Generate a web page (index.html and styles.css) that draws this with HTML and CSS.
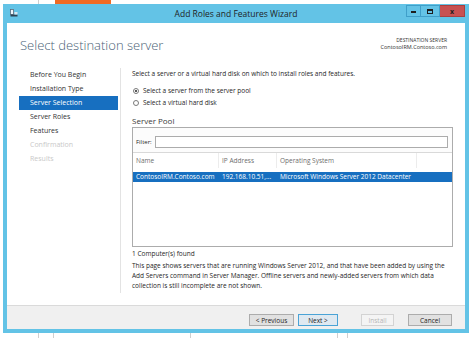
FILE: index.html
```html
<!DOCTYPE html>
<html lang="en">
<head>
    <meta charset="UTF-8">
    <title>Add Roles and Features Wizard</title>
    <link rel="stylesheet" href="styles.css">
</head>
<body>
    <div class="desktop">
        <div class="taskbar-tab"></div>
        <div class="desk-line line-a"></div>
        <div class="desk-line line-b"></div>
        <div class="desk-line line-c"></div>
        <div class="desk-line line-d"></div>
        <div class="desk-line line-e"></div>

        <div class="window">
            <div class="titlebar">
                <svg class="app-icon" viewBox="0 0 8 8">
                    <rect x="0.5" y="0.5" width="3" height="5" fill="#eef6fb" stroke="#5a6c7a" stroke-width="0.8"/>
                    <rect x="0.5" y="5.5" width="7" height="2" fill="#2f4252"/>
                    <rect x="4.5" y="3" width="3" height="2.5" fill="#d7e6ef"/>
                </svg>
                <div class="title">Add Roles and Features Wizard</div>
                <div class="controls">
                    <span class="ctl min"><i></i></span>
                    <span class="ctl max"><i></i></span>
                    <span class="ctl close">x</span>
                </div>
            </div>

            <div class="client">
                <div class="header">
                    <h1>Select destination server</h1>
                    <div class="dest">
                        <div class="dest-label">DESTINATION SERVER</div>
                        <div>ContosoIRM.Contoso.com</div>
                    </div>
                </div>

                <div class="main">
                    <ul class="nav">
                        <li>Before You Begin</li>
                        <li>Installation Type</li>
                        <li class="active">Server Selection</li>
                        <li>Server Roles</li>
                        <li>Features</li>
                        <li class="disabled">Confirmation</li>
                        <li class="disabled">Results</li>
                    </ul>

                    <div class="content">
                        <p class="intro">Select a server or a virtual hard disk on which to install roles and features.</p>

                        <div class="options">
                            <label class="option"><span class="radio checked"></span>Select a server from the server pool</label>
                            <label class="option"><span class="radio"></span>Select a virtual hard disk</label>
                        </div>

                        <h2>Server Pool</h2>

                        <div class="pool">
                            <div class="filter-row">
                                <span class="filter-label">Filter:</span>
                                <div class="filter-input"></div>
                            </div>
                            <div class="grid">
                                <div class="grid-head">
                                    <span>Name</span>
                                    <span>IP Address</span>
                                    <span>Operating System</span>
                                    <span class="filler"></span>
                                </div>
                                <div class="grid-rows">
                                    <div class="grid-row selected">
                                        <span>ContosoIRM.Contoso.com</span>
                                        <span>192.168.10.51,...</span>
                                        <span>Microsoft Windows Server 2012 Datacenter</span>
                                        <span></span>
                                    </div>
                                </div>
                            </div>
                        </div>

                        <p class="found">1 Computer(s) found</p>
                        <p class="note">This page shows servers that are running Windows Server 2012, and that have been added by using the Add Servers command in Server Manager. Offline servers and newly-added servers from which data collection is still incomplete are not shown.</p>
                    </div>
                </div>

                <div class="footer">
                    <button class="btn prev">&lt; Previous</button>
                    <button class="btn next">Next &gt;</button>
                    <button class="btn install" disabled>Install</button>
                    <button class="btn cancel">Cancel</button>
                </div>
            </div>
        </div>
    </div>
</body>
</html>
```

FILE: styles.css
```css
body {
    margin: 0;
    background: #fff;
    font-family: "Open Sans", "Liberation Sans", sans-serif;
    color: #262626;
}
.desktop {
    position: relative;
    width: 474px;
    height: 338px;
    padding-top: 4px;
    box-sizing: border-box;
    overflow: hidden;
}
.taskbar-tab {
    position: absolute;
    left: 55px;
    top: 0;
    width: 56px;
    height: 4px;
    background: #f06a24;
}
.desk-line {
    position: absolute;
    width: 1px;
    background: #cfcfcf;
}
.line-a { left: 38px; top: 0; height: 338px; }
.line-b { left: 53px; top: 333px; height: 5px; }
.line-c { left: 190px; top: 333px; height: 5px; }
.line-d { left: 337px; top: 333px; height: 5px; }
.line-e { left: 347px; top: 333px; height: 5px; }

.window {
    position: relative;
    margin-left: 3px;
    width: 466px;
    height: 329px;
    box-sizing: border-box;
    padding: 0 4px 4px;
    background: #63c3e6;
    display: flex;
    flex-direction: column;
}

/* title bar */
.titlebar {
    height: 19px;
    display: grid;
    grid-template-columns: 1fr auto 1fr;
    align-items: start;
}
.app-icon {
    width: 8px;
    height: 8px;
    margin: 5px 0 0 3px;
}
.title {
    font-size: 8.5px;
    line-height: 19px;
    color: #1e1e1e;
}
.controls {
    justify-self: end;
    display: flex;
    margin-top: 1px;
}
.ctl {
    height: 12px;
    box-sizing: border-box;
    border: 1px solid #3f9fc9;
    display: flex;
    align-items: center;
    justify-content: center;
}
.min {
    width: 15px;
    align-items: flex-end;
    padding-bottom: 3px;
}
.min i {
    width: 5px;
    height: 2px;
    background: #1e1e1e;
}
.max {
    width: 19px;
    border-left: none;
}
.max i {
    width: 4px;
    height: 2px;
    border: 1px solid #1e1e1e;
    border-top-width: 2px;
}
.close {
    width: 25px;
    border-left: none;
    border-color: #a94040;
    background: #c85151;
    font-size: 7px;
    font-weight: bold;
    color: #1e1e1e;
}

/* client area */
.client {
    flex: 1;
    background: #fff;
    display: flex;
    flex-direction: column;
}
.header {
    height: 39px;
    display: flex;
    justify-content: space-between;
    align-items: flex-start;
    padding: 0 18px 0 13px;
}
.header h1 {
    margin: 13px 0 0;
    font-size: 13px;
    font-weight: 300;
    line-height: 18px;
    color: #4a5f76;
}
.dest {
    margin-top: 14px;
    text-align: right;
    font-size: 5.5px;
    line-height: 7px;
    color: #333;
}
.dest-label {
    font-size: 5px;
}

.main {
    flex: 1;
    display: flex;
    padding: 6px 12px 12px;
}
.nav {
    width: 101px;
    margin: 0;
    padding: 0;
    list-style: none;
    border-right: 1px solid #e3e3e3;
}
.nav li {
    height: 14px;
    line-height: 14px;
    margin-right: 2px;
    padding-left: 11px;
    font-size: 7px;
    color: #333;
}
.nav li.active {
    background: #176fc0;
    color: #fff;
}
.nav li.disabled {
    color: #c8c8c8;
}

.content {
    flex: 1;
    padding-left: 11px;
    font-size: 6.5px;
    line-height: 10px;
    display: flex;
    flex-direction: column;
}
.content p {
    margin: 0;
}
.intro {
    margin-top: 1px !important;
}
.options {
    margin-top: 7px;
    display: flex;
    flex-direction: column;
    gap: 2px;
}
.option {
    display: flex;
    align-items: center;
    gap: 4px;
    height: 10px;
}
.radio {
    width: 6px;
    height: 6px;
    margin-left: 1px;
    box-sizing: border-box;
    border: 1px solid #7a7a7a;
    border-radius: 50%;
    background: #fff;
    display: flex;
    align-items: center;
    justify-content: center;
}
.radio.checked::after {
    content: "";
    width: 2px;
    height: 2px;
    border-radius: 50%;
    background: #222;
}
.content h2 {
    margin: 7px 0 0;
    font-size: 8px;
    font-weight: normal;
    line-height: 12px;
    color: #3a3a3a;
}

.pool {
    height: 120px;
    box-sizing: border-box;
    border: 1px solid #acacac;
    display: flex;
    flex-direction: column;
}
.filter-row {
    height: 24px;
    box-sizing: border-box;
    display: flex;
    align-items: flex-start;
    padding: 8px 4px 0 3px;
    background: #fcfcfc;
}
.filter-label {
    width: 19px;
    font-size: 6px;
    line-height: 12px;
}
.filter-input {
    flex: 1;
    height: 12px;
    box-sizing: border-box;
    border: 1px solid #acacac;
    background: #fff;
}
.grid {
    flex: 1;
    border-top: 1px solid #d9d9d9;
}
.grid-head,
.grid-row {
    display: grid;
    grid-template-columns: 86px 58px 140px 1fr;
}
.grid-head {
    height: 15px;
    line-height: 15px;
    color: #6e6e6e;
}
.grid-head span {
    padding-left: 3px;
    border-right: 1px solid #ececec;
}
.grid-head .filler {
    border-right: none;
}
.grid-rows {
    padding-top: 4px;
}
.grid-row {
    height: 10px;
    line-height: 10px;
    white-space: nowrap;
}
.grid-row span {
    padding-left: 3px;
}
.grid-row.selected {
    background: #176fc0;
    color: #fff;
}
.found {
    margin-top: 2px !important;
}
.note {
    margin-top: 2px !important;
}

/* footer */
.footer {
    height: 24px;
    box-sizing: border-box;
    border-top: 1px solid #dadada;
    background: #f0f0f0;
    display: flex;
    justify-content: flex-end;
    align-items: flex-start;
    padding: 8px 13px 0 0;
}
.btn {
    height: 12px;
    padding: 0;
    box-sizing: border-box;
    border: 1px solid #acacac;
    background: #e1e1e1;
    font-family: inherit;
    font-size: 6.5px;
    color: #1e1e1e;
}
.prev { width: 45px; }
.next {
    width: 40px;
    margin-left: 4px;
    border-color: #4aa3d6;
    background: #dfe9f1;
}
.install {
    width: 33px;
    margin-left: 23px;
    border-color: #d3d3d3;
    background: #f4f4f4;
    color: #b4b4b4;
}
.cancel {
    width: 44px;
    margin-left: 14px;
}
```
